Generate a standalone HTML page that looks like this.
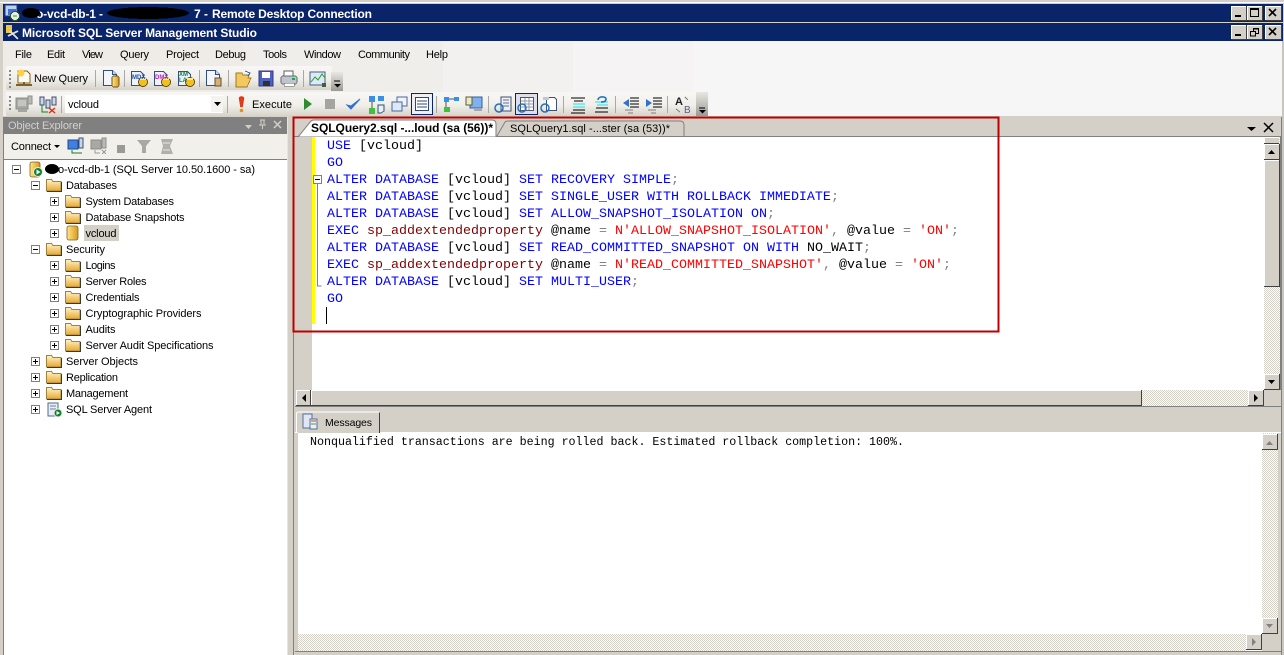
<!DOCTYPE html>
<html><head><meta charset="utf-8"><title>SSMS</title>
<style>
html,body{margin:0;padding:0;background:#d4d0c8;width:1284px;height:655px;overflow:hidden}
svg{display:block;font-family:"Liberation Sans",sans-serif;font-size:11px}
.code{font-family:"Liberation Mono",monospace;font-size:13.33px;white-space:pre}
.k{fill:#0000ff}.r{fill:#ff0000}.m{fill:#800000}.g{fill:#808080}.t{fill:#000}
</style></head><body>
<svg width="1284" height="655" viewBox="0 0 1284 655" xmlns="http://www.w3.org/2000/svg" shape-rendering="crispEdges">
<defs>
<linearGradient id="tb" x1="0" y1="0" x2="0" y2="1"><stop offset="0" stop-color="#f8f7f5"/><stop offset=".55" stop-color="#f0efea"/><stop offset="1" stop-color="#d6d3ca"/></linearGradient>
<linearGradient id="ov" x1="0" y1="0" x2="0" y2="1"><stop offset="0" stop-color="#e8e7e2"/><stop offset="1" stop-color="#9b9a94"/></linearGradient>
<linearGradient id="fd" x1="0" y1="0" x2="0" y2="1"><stop offset="0" stop-color="#fff6c8"/><stop offset="1" stop-color="#e8a832"/></linearGradient>
<linearGradient id="cyl" x1="0" y1="0" x2="1" y2="0"><stop offset="0" stop-color="#ffe68a"/><stop offset="1" stop-color="#d89a1c"/></linearGradient>
<pattern id="chk" width="2" height="2" patternUnits="userSpaceOnUse"><rect width="2" height="2" fill="#fff"/><rect width="1" height="1" fill="#d4d0c8"/><rect x="1" y="1" width="1" height="1" fill="#d4d0c8"/></pattern>
<symbol id="folder" width="16" height="14" viewBox="0 0 16 14" overflow="visible">
<path d="M.5 3.500V1.500h5l1.500 2h8v9.500H.5z" fill="url(#fd)" stroke="#a08040"/><path d="M1 13.500h15M15.500 4v10" stroke="#3a3a30" fill="none"/>
</symbol>
<symbol id="plus" width="9" height="9" viewBox="0 0 9 9"><rect x=".5" y=".5" width="8" height="8" fill="#fff" stroke="#808080"/><path d="M2 4.500h5M4.500 2v5" stroke="#000"/></symbol>
<symbol id="minus" width="9" height="9" viewBox="0 0 9 9"><rect x=".5" y=".5" width="8" height="8" fill="#fff" stroke="#808080"/><path d="M2 4.500h5" stroke="#000"/></symbol>
<symbol id="doc" width="14" height="16" viewBox="0 0 14 16"><path d="M.5.5h9l4 4v11H.5z" fill="#f3f6fc" stroke="#33507a"/><path d="M9.500.5v4h4" fill="#c8d6ea" stroke="#33507a"/></symbol>
<symbol id="dbdoc" width="17" height="17" viewBox="0 0 17 17"><path d="M.5 1.500h9l3 3v11H.5z" fill="#eef2fa" stroke="#33507a"/><circle cx="12" cy="12" r="4.500" fill="#f0c020" stroke="#6a5010"/><rect x="9" y="8" width="6" height="2" fill="#ffe890"/></symbol>
</defs>

<!-- window frames -->
<rect width="1284" height="655" fill="#d4d0c8"/>
<rect x="0" y="2" width="1284" height="1" fill="#fff"/>
<rect x="3" y="4" width="1280" height="18" fill="#0a246a"/>
<rect x="3" y="23" width="1280" height="18" fill="#0a246a"/>
<rect x="1282" y="41" width="2" height="614" fill="#c8c6c0"/>

<!-- title icons -->
<g>
<rect x="5" y="5" width="12" height="11" fill="#bcd0f0" stroke="#203a80"/><rect x="8" y="9" width="8" height="6" fill="#4070d0"/><circle cx="15" cy="16" r="4.500" fill="#e8f0e0" stroke="#305030"/><path d="M13 16h4" stroke="#20a020"/>
<rect x="6" y="25" width="6" height="8" fill="#f0c840"/><path d="M8 36l10-5M10 31l8 8" stroke="#e0e0e0" stroke-width="2" fill="none"/>
</g>
<g fill="#fff" font-weight="bold" font-size="12">
<text x="36" y="18" textLength="67">o-vcd-db-1 -</text>
<text x="194" y="18" textLength="6">7</text>
<text x="204" y="18">-</text>
<text x="212" y="18" textLength="160">Remote Desktop Connection</text>
<text x="22" y="37" textLength="235">Microsoft SQL Server Management Studio</text>
</g>
<ellipse cx="31" cy="13" rx="9" ry="5" fill="#000"/>
<ellipse cx="148" cy="13" rx="41" ry="6" fill="#000"/>

<!-- caption buttons -->
<g>
<rect x="1231" y="6" width="15" height="14" fill="#d4d0c8"/>
<path d="M1231.500 20V6.500h15" stroke="#fff" fill="none"/><path d="M1246.500 6v14.500h-15" stroke="#404040" fill="none"/>
<rect x="1235" y="15" width="6" height="2" fill="#000"/>
<rect x="1247" y="6" width="15" height="14" fill="#d4d0c8"/><path d="M1247.500 20V6.500h15" stroke="#fff" fill="none"/><path d="M1262.500 6v14.500h-15" stroke="#404040" fill="none"/>
<rect x="1250.500" y="8.500" width="8" height="8" fill="none" stroke="#000"/><rect x="1250" y="8" width="9" height="2" fill="#000"/>
<rect x="1265" y="6" width="16" height="14" fill="#d4d0c8"/><path d="M1265.500 20V6.500h16" stroke="#fff" fill="none"/><path d="M1281.500 6v14.500h-16" stroke="#404040" fill="none"/>
<path d="M1269 9l7 7M1276 9l-7 7" stroke="#000" stroke-width="1.600" shape-rendering="auto"/>
<rect x="1231" y="25" width="15" height="14" fill="#d4d0c8"/><path d="M1231.500 39V25.500h15" stroke="#fff" fill="none"/><path d="M1246.500 25v14.500h-15" stroke="#404040" fill="none"/>
<rect x="1235" y="34" width="6" height="2" fill="#000"/>
<rect x="1247" y="25" width="15" height="14" fill="#d4d0c8"/><path d="M1247.500 39V25.500h15" stroke="#fff" fill="none"/><path d="M1262.500 25v14.500h-15" stroke="#404040" fill="none"/>
<rect x="1253.500" y="28.500" width="5" height="5" fill="none" stroke="#000"/><rect x="1253" y="28" width="6" height="1.600" fill="#000"/><rect x="1250.500" y="31.500" width="5" height="4.500" fill="#d4d0c8" stroke="#000"/>
<rect x="1265" y="25" width="16" height="14" fill="#d4d0c8"/><path d="M1265.500 39V25.500h16" stroke="#fff" fill="none"/><path d="M1281.500 25v14.500h-16" stroke="#404040" fill="none"/>
<path d="M1269 28l7 7M1276 28l-7 7" stroke="#000" stroke-width="1.600" shape-rendering="auto"/>
</g>

<!-- menu band -->
<rect x="3" y="41" width="1279" height="75" fill="#f6f6f6"/>
<rect x="3" y="41" width="240" height="75" fill="#efebe6"/>
<rect x="243" y="41" width="200" height="75" fill="#efeeea"/>
<rect x="443" y="41" width="130" height="75" fill="#f2f1ef"/>
<rect x="573" y="41" width="120" height="75" fill="#f5f3f3"/>
<g fill="#000">
<text x="15" y="58" textLength="17">File</text><text x="47" y="58" textLength="18">Edit</text><text x="82" y="58" textLength="21">View</text><text x="120" y="58" textLength="29">Query</text><text x="166" y="58" textLength="33">Project</text><text x="215" y="58" textLength="31">Debug</text><text x="263" y="58" textLength="24">Tools</text><text x="304" y="58" textLength="37">Window</text><text x="358" y="58" textLength="52">Community</text><text x="426" y="58" textLength="22">Help</text>
</g>

<!-- toolbars -->
<rect x="6" y="66" width="326" height="24" rx="2" fill="url(#tb)"/>
<rect x="331" y="72" width="12" height="19" fill="url(#ov)"/>
<path d="M334 81h6" stroke="#000"/><path d="M334 84h7l-3.500 3.500z" fill="#000" shape-rendering="auto"/>
<rect x="6" y="92" width="692" height="24" rx="2" fill="url(#tb)"/>
<rect x="696" y="92" width="12" height="24" fill="url(#ov)"/>
<path d="M699 108h6" stroke="#000"/><path d="M699 110h7l-3.500 3.500z" fill="#000" shape-rendering="auto"/>
<!-- grippers -->
<g fill="#8a8a84"><rect x="9" y="70" width="2" height="2"/><rect x="9" y="74" width="2" height="2"/><rect x="9" y="78" width="2" height="2"/><rect x="9" y="82" width="2" height="2"/><rect x="9" y="86" width="2" height="2"/>
<rect x="9" y="96" width="2" height="2"/><rect x="9" y="100" width="2" height="2"/><rect x="9" y="104" width="2" height="2"/><rect x="9" y="108" width="2" height="2"/></g>
<!-- separators -->
<g fill="#a9a8a2"><rect x="95" y="70" width="1" height="17"/><rect x="124" y="70" width="1" height="17"/><rect x="199" y="70" width="1" height="17"/><rect x="228" y="70" width="1" height="17"/><rect x="303" y="70" width="1" height="17"/>
<rect x="61" y="96" width="1" height="17"/><rect x="227" y="96" width="1" height="17"/><rect x="436" y="96" width="1" height="17"/><rect x="488" y="96" width="1" height="17"/><rect x="563" y="96" width="1" height="17"/><rect x="615" y="96" width="1" height="17"/><rect x="667" y="96" width="1" height="17"/></g>

<!-- toolbar1 icons -->
<path d="M18 71h9l3 3v9H18z" fill="#fbfbf6" stroke="#806020" stroke-width=".8"/><circle cx="21" cy="73" r="3.500" fill="#ffd040" shape-rendering="auto"/><path d="M16 85h16" stroke="#806020" stroke-width="2"/><rect x="23" y="82" width="2" height="4" fill="#806020"/>
<text x="34" y="82" textLength="54">New Query</text>
<use href="#doc" x="103" y="70"/><rect x="112" y="76" width="7" height="11" rx="2" fill="url(#cyl)" stroke="#705010" stroke-width=".8"/>
<use href="#dbdoc" x="131" y="70"/><text x="132" y="79" font-size="6" fill="#2050a0" font-weight="bold">MDX</text>
<use href="#dbdoc" x="154" y="70"/><text x="155" y="79" font-size="6" fill="#c020c0" font-weight="bold">DMX</text>
<use href="#dbdoc" x="178" y="70"/><text x="179" y="76" font-size="6" fill="#108050" font-weight="bold">XM</text><text x="179" y="82" font-size="6" fill="#108050" font-weight="bold">LA</text>
<use href="#doc" x="206" y="70"/><rect x="215" y="78" width="6" height="8" fill="#d8b070" stroke="#605040" stroke-width=".8"/>
<path d="M236 73h6l1 2h6l-1 3h3l-4 9h-11z" fill="#f3c860" stroke="#a07820" stroke-width=".8"/><path d="M245 71l5 2-2 3" stroke="#3060c0" fill="none"/>
<rect x="259" y="71" width="14" height="15" fill="#5060c0" stroke="#303880"/><rect x="262" y="72" width="8" height="6" fill="#fff"/><rect x="263" y="81" width="7" height="5" fill="#303030"/>
<path d="M284 71h9v5h-9z" fill="#fff" stroke="#606060" stroke-width=".8"/><rect x="281" y="76" width="16" height="8" rx="2" fill="#c0c4cc" stroke="#606878" stroke-width=".8"/><rect x="292" y="78" width="3" height="2" fill="#10b040"/><rect x="284" y="83" width="10" height="3" fill="#fff" stroke="#606060" stroke-width=".5"/>
<rect x="310" y="72" width="15" height="13" fill="#dfe8f5" stroke="#40608a"/><path d="M311 82l4-5 3 3 4-6 3 4" stroke="#20a020" fill="none" shape-rendering="auto"/><rect x="322" y="83" width="4" height="4" fill="#406040"/>

<!-- toolbar2 icons -->
<rect x="16" y="98" width="12" height="11" fill="#a8a8a4" stroke="#8c8c88"/><rect x="18" y="100" width="8" height="6" fill="#c4c4c0"/><rect x="18" y="109" width="9" height="3" fill="#a4a4a0"/><rect x="28" y="96" width="4" height="8" fill="#b8b8b4" stroke="#909090" stroke-width=".6"/>
<rect x="40" y="97" width="4" height="8" fill="#d0d8e8" stroke="#405070" stroke-width=".8"/><rect x="46" y="100" width="4" height="8" fill="#d0d8e8" stroke="#405070" stroke-width=".8"/><rect x="52" y="97" width="4" height="8" fill="#d0d8e8" stroke="#405070" stroke-width=".8"/><path d="M42 105v7h6" stroke="#108020" fill="none"/><path d="M49 108l6 5M55 108l-6 5" stroke="#f02010" stroke-width="1.300" shape-rendering="auto"/>
<rect x="65" y="95" width="158" height="18" fill="#fff"/>
<text x="68" y="108" textLength="31">vcloud</text>
<rect x="211" y="96" width="12" height="16" fill="#f4f3f0"/><path d="M214 102h7l-3.500 4z" fill="#000" shape-rendering="auto"/>
<path d="M239 98c0-2 5-2 5 0l-1.500 9h-2z" fill="#e83818" stroke="#c04010" stroke-width=".5" shape-rendering="auto"/><circle cx="241.500" cy="110.500" r="1.800" fill="#e09020" shape-rendering="auto"/>
<text x="252" y="108" textLength="40">Execute</text>
<path d="M304 98l8 6-8 6z" fill="#308a30" shape-rendering="auto"/>
<rect x="325" y="99" width="10" height="10" fill="#a4a4a0"/>
<path d="M347 105l4 4 9-10-9 7z" fill="#3070d0" stroke="#3070d0" stroke-width="1" shape-rendering="auto"/>
<rect x="369" y="96" width="6" height="6" fill="#3890e8"/><rect x="378" y="96" width="6" height="5" fill="#3890e8"/><rect x="369" y="108" width="6" height="6" fill="#40c040"/><path d="M372 102v6" stroke="#505050"/><path d="M378 105h6v6l-3 2h-3z" fill="#e8f0fa" stroke="#305070" stroke-width=".8"/>
<rect x="397" y="97" width="10" height="9" fill="#f0f4fa" stroke="#4868a0"/><rect x="392" y="102" width="10" height="9" fill="#e0e8f5" stroke="#4868a0"/>
<rect x="411.500" y="93.500" width="21" height="21" fill="#eef0f6" stroke="#0a246a"/><rect x="415.500" y="97.500" width="13" height="13" fill="#fff" stroke="#304870"/><path d="M417 101h10M417 104h10M417 107h10" stroke="#304870"/>
<rect x="444" y="97" width="5" height="5" fill="#3890e8"/><rect x="454" y="97" width="5" height="4" fill="#3890e8"/><rect x="444" y="107" width="6" height="5" fill="#40c040"/><path d="M446 102v5M449 99h5" stroke="#505050"/>
<rect x="470" y="97" width="12" height="11" fill="#80b0f0" stroke="#3060a0"/><rect x="466" y="97" width="6" height="8" fill="#f0e8c0" stroke="#506040"/><rect x="474" y="108" width="8" height="3" fill="#a0a8b8"/>
<rect x="501" y="97" width="10" height="14" fill="#f0f0f4" stroke="#405070"/><path d="M503 100h6M503 103h6M503 106h6" stroke="#607090"/><circle cx="499" cy="108" r="4" fill="none" stroke="#2070c0" stroke-width="1.500" shape-rendering="auto"/>
<rect x="515.500" y="93.500" width="22" height="21" fill="#dde0ea" stroke="#0a246a"/><rect x="520.500" y="97.500" width="13" height="13" fill="#fff" stroke="#505868"/><path d="M521 101h12M521 104h12M521 107h12M525 98v12M529 98v12" stroke="#909aa8"/><circle cx="522" cy="108" r="4" fill="none" stroke="#2070c0" stroke-width="1.500" shape-rendering="auto"/>
<path d="M546.500 97.500h8l2 2v11h-10z" fill="#fff" stroke="#405070"/><rect x="543" y="97" width="6" height="3" fill="#c0c8d8"/><circle cx="545" cy="108" r="4" fill="none" stroke="#2070c0" stroke-width="1.500" shape-rendering="auto"/>
<path d="M571 98h14M574 101h9" stroke="#000"/><path d="M573 104h12M573 107h12" stroke="#20e0e8"/><path d="M573 110h12M571 113h14" stroke="#000"/>
<path d="M595 102h13M597 105h11" stroke="#20e0e8"/><path d="M596 108h12M595 112h13" stroke="#000"/><path d="M598 100c0-4 8-4 8-1s-3 3-5 3" stroke="#1070d0" stroke-width="1.500" fill="none" shape-rendering="auto"/>
<path d="M630 98h9M630 101h9M630 104h9M630 107h9" stroke="#000" stroke-width="1.300"/><path d="M623 103l6-4v8z" fill="#3070d0" shape-rendering="auto"/><path d="M625 110h8M628 113h5" stroke="#808080"/>
<path d="M653 98h9M653 101h9M653 104h9M653 107h9" stroke="#000" stroke-width="1.300"/><path d="M652 103l-6-4v8z" fill="#3070d0" shape-rendering="auto"/><path d="M648 110h8M651 113h5" stroke="#808080"/>
<text x="675" y="105" font-size="11" font-weight="bold" fill="#222">A</text><text x="684" y="113" font-size="10" fill="#506080">B</text><path d="M685 97l3 3M676 109l4 3" stroke="#808080" fill="none"/>

<!-- object explorer -->
<rect x="3" y="117" width="284" height="17" fill="#808080"/>
<text x="8" y="129" textLength="74" fill="#d4d0c8">Object Explorer</text>
<path d="M245 125h7l-3.500 4z" fill="#d4d0c8" shape-rendering="auto"/>
<path d="M260 120h5M261 120v5h3v-5M259 125h7M262.500 125v4" stroke="#d4d0c8" fill="none"/>
<path d="M274 121l7 7M281 121l-7 7" stroke="#d4d0c8" stroke-width="1.500" shape-rendering="auto"/>
<rect x="3" y="134" width="284" height="25" fill="#f2f0ea"/>
<rect x="3" y="134" width="1" height="521" fill="#808080"/>
<text x="11" y="150" textLength="40">Connect</text>
<path d="M54 145h6l-3 3z" fill="#000" shape-rendering="auto"/>
<rect x="68" y="140" width="10" height="9" fill="#4080e0" stroke="#204890"/><rect x="79" y="138" width="4" height="10" fill="#c8d4e8" stroke="#405070"/><path d="M72 150v3h10" stroke="#108020" fill="none"/>
<rect x="91" y="140" width="10" height="9" fill="#a8a8a4" stroke="#8c8c88"/><rect x="102" y="138" width="4" height="10" fill="#b8b8b4" stroke="#909090"/><path d="M95 150v3h5M102 150l4 4M106 150l-4 4" stroke="#9a9a96" fill="none"/>
<rect x="117" y="145" width="8" height="8" fill="#9a9a96"/>
<path d="M137 140h14l-5 6v7h-4v-7z" fill="#a8a8a4" shape-rendering="auto"/>
<path d="M161 139h12l-3 7 3 8h-12l2-8z" fill="#b0b0ac" shape-rendering="auto"/><path d="M163 143h7M163 150h7" stroke="#e8e8e4"/>
<rect x="4" y="160" width="283" height="495" fill="#fff"/>
<rect x="3" y="159" width="284" height="1" fill="#808080"/>
<rect x="287" y="117" width="1" height="538" fill="#e6e4de"/>

<!-- tree -->
<g>
<use href="#minus" x="12" y="165"/>
<rect x="30" y="162" width="10" height="15" rx="2" fill="url(#cyl)" stroke="#806020" stroke-width=".8" shape-rendering="auto"/>
<circle cx="38" cy="172" r="4.500" fill="#108030" stroke="#e8f0e0" shape-rendering="auto"/><path d="M36.500 169.500l4 2.500-4 2.500z" fill="#fff" shape-rendering="auto"/>
<ellipse cx="52" cy="169" rx="7" ry="5" fill="#000" shape-rendering="auto"/>
<text x="58" y="173" textLength="197">o-vcd-db-1 (SQL Server 10.50.1600 - sa)</text>

<use href="#minus" x="31" y="181"/><use href="#folder" x="46" y="178"/><text x="66" y="189" textLength="51">Databases</text>
<use href="#plus" x="50" y="197"/><use href="#folder" x="65" y="194"/><text x="85.500" y="205" textLength="88.500">System Databases</text>
<use href="#plus" x="50" y="213"/><use href="#folder" x="65" y="210"/><text x="85.500" y="221" textLength="99">Database Snapshots</text>
<use href="#plus" x="50" y="229"/><rect x="67" y="226" width="11" height="14" rx="2" fill="url(#cyl)" stroke="#806020" stroke-width=".8" shape-rendering="auto"/>
<rect x="84" y="225" width="35" height="16" fill="#d4d0c8"/><text x="85.500" y="237" textLength="31">vcloud</text>
<use href="#minus" x="31" y="245"/><use href="#folder" x="46" y="242"/><text x="66" y="253" textLength="39">Security</text>
<use href="#plus" x="50" y="261"/><use href="#folder" x="65" y="258"/><text x="85.500" y="269" textLength="30">Logins</text>
<use href="#plus" x="50" y="277"/><use href="#folder" x="65" y="274"/><text x="85.500" y="285" textLength="61">Server Roles</text>
<use href="#plus" x="50" y="293"/><use href="#folder" x="65" y="290"/><text x="85.500" y="301" textLength="54">Credentials</text>
<use href="#plus" x="50" y="309"/><use href="#folder" x="65" y="306"/><text x="85.500" y="317" textLength="116">Cryptographic Providers</text>
<use href="#plus" x="50" y="325"/><use href="#folder" x="65" y="322"/><text x="85.500" y="333" textLength="30">Audits</text>
<use href="#plus" x="50" y="341"/><use href="#folder" x="65" y="338"/><text x="85.500" y="349" textLength="128">Server Audit Specifications</text>
<use href="#plus" x="31" y="357"/><use href="#folder" x="46" y="354"/><text x="66" y="365" textLength="72">Server Objects</text>
<use href="#plus" x="31" y="373"/><use href="#folder" x="46" y="370"/><text x="66" y="381" textLength="52">Replication</text>
<use href="#plus" x="31" y="389"/><use href="#folder" x="46" y="386"/><text x="66" y="397" textLength="62">Management</text>
<use href="#plus" x="31" y="405"/><rect x="48" y="403" width="10" height="13" fill="#e8eef8" stroke="#506890"/><path d="M50 406h6M50 409h6" stroke="#7080a0"/><circle cx="58" cy="413" r="4" fill="#108030" stroke="#e8f0e0" shape-rendering="auto"/><path d="M56.500 411l3.500 2-3.500 2z" fill="#fff" shape-rendering="auto"/><text x="66" y="413" textLength="86">SQL Server Agent</text>
</g>

<!-- right pane -->
<rect x="293" y="117" width="1" height="538" fill="#808080"/>
<rect x="1281" y="117" width="1" height="538" fill="#808080"/>
<rect x="294" y="117" width="987" height="20" fill="#d4d0c8"/>
<rect x="294" y="136" width="987" height="1" fill="#808080"/>
<!-- inactive tab -->
<path d="M497 136l8-14q1-1 3-1H680q4 0 4 4v11" fill="#d4d0c8" stroke="#808080" shape-rendering="auto"/>
<text x="510" y="132" textLength="160">SQLQuery1.sql -...ster (sa (53))*</text>
<!-- active tab -->
<path d="M298 137l13-16q1-1 3-1H492q4 0 4 4v13z" fill="#fff" stroke="#808080" shape-rendering="auto"/>
<text x="311" y="132" textLength="182" font-weight="bold" font-size="12">SQLQuery2.sql -...loud (sa (56))*</text>
<path d="M1247 127h9l-4.500 4z" fill="#000" shape-rendering="auto"/>
<path d="M1264 123l9 9M1273 123l-9 9" stroke="#000" stroke-width="1.500" shape-rendering="auto"/>

<!-- editor -->
<rect x="296" y="137" width="968" height="253" fill="#fff"/>
<rect x="296" y="137" width="16" height="253" fill="#d4d0c8"/>
<rect x="312" y="137" width="3" height="187" fill="#ffff00"/>
<rect x="313.500" y="175.500" width="8" height="8" fill="#fff" stroke="#808080"/><path d="M315 179.500h5" stroke="#000"/>
<path d="M317.500 184v102h4" stroke="#808080" fill="none"/>

<g class="code">
<text y="149"><tspan x="327" class="k">USE</tspan> <tspan x="359" class="t">[vcloud]</tspan></text>
<text y="166" x="327" class="k">GO</text>
<text y="183"><tspan x="327" class="k">ALTER DATABASE</tspan><tspan x="447" class="t">[vcloud]</tspan><tspan x="519" class="k">SET RECOVERY SIMPLE</tspan><tspan class="g">;</tspan></text>
<text y="200"><tspan x="327" class="k">ALTER DATABASE</tspan><tspan x="447" class="t">[vcloud]</tspan><tspan x="519" class="k">SET SINGLE_USER WITH ROLLBACK IMMEDIATE</tspan><tspan class="g">;</tspan></text>
<text y="217"><tspan x="327" class="k">ALTER DATABASE</tspan><tspan x="447" class="t">[vcloud]</tspan><tspan x="519" class="k">SET ALLOW_SNAPSHOT_ISOLATION ON</tspan><tspan class="g">;</tspan></text>
<text y="234"><tspan x="327" class="k">EXEC</tspan><tspan x="367" class="m">sp_addextendedproperty</tspan><tspan x="551" class="t">@name</tspan><tspan x="599" class="g">=</tspan><tspan x="615" class="r">N'ALLOW_SNAPSHOT_ISOLATION'</tspan><tspan class="g">,</tspan><tspan x="847" class="t">@value</tspan><tspan x="903" class="g">=</tspan><tspan x="919" class="r">'ON'</tspan><tspan class="g">;</tspan></text>
<text y="251"><tspan x="327" class="k">ALTER DATABASE</tspan><tspan x="447" class="t">[vcloud]</tspan><tspan x="519" class="k">SET READ_COMMITTED_SNAPSHOT ON WITH</tspan><tspan x="807" class="t">NO_WAIT</tspan><tspan class="g">;</tspan></text>
<text y="268"><tspan x="327" class="k">EXEC</tspan><tspan x="367" class="m">sp_addextendedproperty</tspan><tspan x="551" class="t">@name</tspan><tspan x="599" class="g">=</tspan><tspan x="615" class="r">N'READ_COMMITTED_SNAPSHOT'</tspan><tspan class="g">,</tspan><tspan x="839" class="t">@value</tspan><tspan x="895" class="g">=</tspan><tspan x="911" class="r">'ON'</tspan><tspan class="g">;</tspan></text>
<text y="285"><tspan x="327" class="k">ALTER DATABASE</tspan><tspan x="447" class="t">[vcloud]</tspan><tspan x="519" class="k">SET MULTI_USER</tspan><tspan class="g">;</tspan></text>
<text y="302" x="327" class="k">GO</text>
</g>
<rect x="326" y="307" width="1" height="17" fill="#000"/>

<!-- editor vertical scrollbar -->
<rect x="1264" y="137" width="16" height="253" fill="url(#chk)"/>
<rect x="1264" y="137" width="15" height="6" fill="#d4d0c8"/><path d="M1264.500 143V137.500h15" stroke="#fff" fill="none"/><path d="M1264 143.500h15" stroke="#404040"/>
<rect x="1264" y="144" width="15" height="15" fill="#d4d0c8"/><path d="M1264.500 159V144.500H1279" stroke="#fff" fill="none"/><path d="M1279.500 144v15.500H1264" stroke="#404040" fill="none"/>
<path d="M1268 154h7l-3.500-4z" fill="#000" shape-rendering="auto"/>
<rect x="1264" y="160" width="15" height="126" fill="#d4d0c8"/><path d="M1264.500 286V160.500H1279" stroke="#fff" fill="none"/><path d="M1279.500 160v126.500H1264" stroke="#404040" fill="none"/>
<rect x="1264" y="374" width="15" height="15" fill="#d4d0c8"/><path d="M1264.500 389V374.500H1279" stroke="#fff" fill="none"/><path d="M1279.500 374v15.500H1264" stroke="#404040" fill="none"/>
<path d="M1268 380h7l-3.500 4z" fill="#000" shape-rendering="auto"/>
<rect x="1280" y="137" width="1" height="269" fill="#808080"/>

<!-- editor horizontal scrollbar -->
<rect x="296" y="390" width="985" height="16" fill="#d4d0c8"/>
<rect x="296" y="390" width="15" height="15" fill="#d4d0c8"/><path d="M296.500 405V390.500H311" stroke="#fff" fill="none"/><path d="M310.500 390v15.500H296" stroke="#404040" fill="none"/>
<path d="M306 394v8l-4-4z" fill="#000" shape-rendering="auto"/>
<rect x="311" y="390" width="831" height="15" fill="#d4d0c8"/><path d="M311.500 405V390.500H1141" stroke="#fff" fill="none"/><path d="M1141.500 390v15.500H311" stroke="#404040" fill="none"/>
<rect x="1142" y="390" width="106" height="16" fill="url(#chk)"/>
<rect x="1248" y="390" width="15" height="15" fill="#d4d0c8"/><path d="M1248.500 405V390.500H1263" stroke="#fff" fill="none"/><path d="M1263.500 390v15.500H1248" stroke="#404040" fill="none"/>
<path d="M1254 394v8l4-4z" fill="#000" shape-rendering="auto"/>
<rect x="295" y="406" width="986" height="1" fill="#808080"/>

<!-- messages -->
<rect x="295" y="407" width="986" height="26" fill="#d4d0c8"/>
<path d="M295 432.500h3M380 432.500h901" stroke="#fff"/>
<path d="M296.500 432V414q0-2 2-2H379.500" stroke="#fff" fill="none"/><path d="M379.500 412.500V433" stroke="#404040" fill="none"/>
<rect x="303" y="414" width="9" height="14" fill="#dfe6f4" stroke="#5070a0"/><rect x="310" y="419" width="7" height="10" fill="#f0f0f0" stroke="#5070a0"/><path d="M311 421h5" stroke="#e04020"/><path d="M311 424h5" stroke="#40a040"/>
<text x="325" y="426" textLength="47" font-size="10.500">Messages</text>
<rect x="298" y="433" width="964" height="218" fill="#fff"/>
<text x="310" y="445" font-size="11.670" textLength="594" style="font-family:'Liberation Mono',monospace">Nonqualified transactions are being rolled back. Estimated rollback completion: 100%.</text>
<rect x="1262" y="433" width="16" height="201" fill="url(#chk)"/>
<rect x="1262" y="434" width="15" height="15" fill="#d4d0c8"/><path d="M1262.500 449V434.500H1277" stroke="#fff" fill="none"/><path d="M1277.500 434v15.500H1262" stroke="#404040" fill="none"/>
<path d="M1266 445h7l-3.500-4z" fill="#808080" shape-rendering="auto"/>
<rect x="1262" y="618" width="15" height="15" fill="#d4d0c8"/><path d="M1262.500 633V618.500H1277" stroke="#fff" fill="none"/><path d="M1277.500 618v15.500H1262" stroke="#404040" fill="none"/>
<path d="M1266 624h7l-3.500 4z" fill="#808080" shape-rendering="auto"/>
<rect x="298" y="634" width="948" height="17" fill="url(#chk)"/>
<rect x="1246" y="634" width="15" height="15" fill="#d4d0c8"/><path d="M1246.500 649V634.500H1261" stroke="#fff" fill="none"/><path d="M1261.500 634v15.500H1246" stroke="#404040" fill="none"/>
<path d="M1252 638v8l4-4z" fill="#808080" shape-rendering="auto"/>
<rect x="295" y="651" width="986" height="1" fill="#808080"/>

<!-- red highlight -->
<rect x="293.500" y="117.500" width="705" height="214" fill="none" stroke="#c00000" stroke-width="2"/>
</svg>
</body></html>
